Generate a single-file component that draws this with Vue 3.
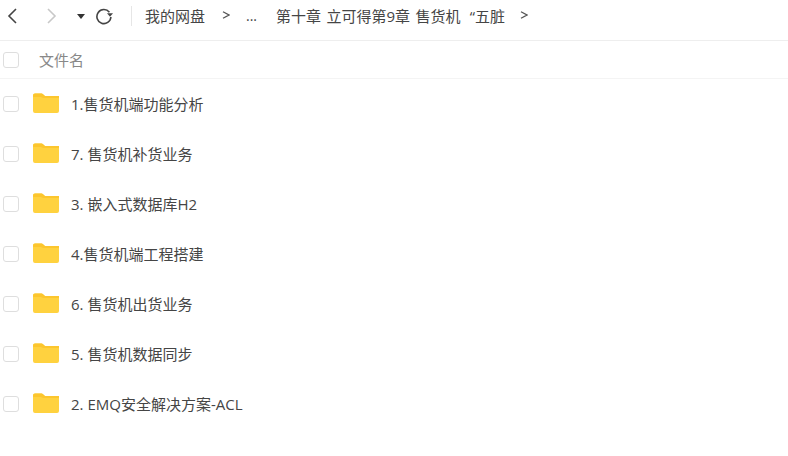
<template>
  <div class="page">
    <div class="toolbar">
      <button class="nav-btn back" type="button">
        <svg width="12" height="18" viewBox="0 0 12 18"><path d="M10 2 L3 9 L10 16" fill="none" stroke="#444" stroke-width="1.6" /></svg>
      </button>
      <button class="nav-btn forward" type="button">
        <svg width="12" height="18" viewBox="0 0 12 18"><path d="M2 2 L9 9 L2 16" fill="none" stroke="#c8c8c8" stroke-width="1.6" /></svg>
      </button>
      <span class="caret"></span>
      <button class="nav-btn refresh" type="button">
        <svg width="18" height="18" viewBox="0 0 18 18">
          <path d="M14.4 5.2 A7 7 0 1 0 15.9 10" fill="none" stroke="#444" stroke-width="1.6" />
          <path d="M12 6.2 L18 6.2 L15 9.8 Z" fill="#444" />
        </svg>
      </button>
      <span class="divider"></span>
      <nav class="crumbs">
        <span class="crumb root">我的网盘</span>
        <svg class="sep first" width="8" height="8" viewBox="0 0 8 8"><path d="M1 .8 L7 4 L1 7.2" fill="none" stroke="#555" stroke-width="1.3" /></svg>
        <span class="crumb dots">...</span>
        <span class="crumb current">第十章 立可得第9章 售货机 <span class="quoted">“五脏</span></span>
        <svg class="sep last" width="8" height="8" viewBox="0 0 8 8"><path d="M1 .8 L7 4 L1 7.2" fill="none" stroke="#555" stroke-width="1.3" /></svg>
      </nav>
    </div>

    <div class="head-row">
      <span class="check"></span>
      <span class="head-label">文件名</span>
    </div>

    <ul class="list">
      <li v-for="name in folders" :key="name" class="row">
        <span class="check"></span>
        <svg class="folder" width="26" height="20" viewBox="0 0 26 20">
          <path d="M0 2.5 A2 2 0 0 1 2 .5 H8.5 A2 2 0 0 1 10 1.2 L12 3 H24 A2 2 0 0 1 26 5 V18 A2 2 0 0 1 24 20 H2 A2 2 0 0 1 0 18 Z" fill="#ffd23f" />
          <path d="M0 2.5 A2 2 0 0 1 2 .5 H8.5 A2 2 0 0 1 10 1.2 L12 3 H26 V5 H10 L8 4 H0 Z" fill="#fcc62e" />
        </svg>
        <span class="name">{{ name }}</span>
      </li>
    </ul>
  </div>
</template>

<script setup>
const folders = [
  '1.售货机端功能分析',
  '7. 售货机补货业务',
  '3. 嵌入式数据库H2',
  '4.售货机端工程搭建',
  '6. 售货机出货业务',
  '5. 售货机数据同步',
  '2. EMQ安全解决方案-ACL',
]
</script>

<style>
html, body {
  margin: 0;
  background: #fff;
}
</style>

<style scoped>
.page {
  width: 788px;
  height: 456px;
  overflow: hidden;
  background: #fff;
  font-family: "Open Sans", "Noto Sans CJK SC", sans-serif;
  color: #454545;
}

.toolbar {
  display: flex;
  align-items: center;
  height: 32px;
  padding-bottom: 8px;
  border-bottom: 1px solid #eeeeee;
}

.nav-btn {
  display: flex;
  align-items: center;
  justify-content: center;
  padding: 0;
  border: 0;
  background: none;
}

.back {
  margin-left: 6px;
}

.forward {
  margin-left: 28px;
}

.caret {
  width: 0;
  height: 0;
  margin-left: 19px;
  border-left: 4px solid transparent;
  border-right: 4px solid transparent;
  border-top: 5px solid #333;
}

.refresh {
  margin-left: 10px;
}

.divider {
  width: 1px;
  height: 20px;
  margin-left: 18px;
  background: #e6e6e6;
}

.crumbs {
  display: flex;
  align-items: center;
  font-size: 15px;
  margin-left: 13px;
  margin-bottom: 2px;
}

.sep.first {
  margin-left: 17px;
}

.dots {
  margin-left: 16px;
  font-size: 14px;
}

.current {
  margin-left: 19px;
  word-spacing: 1.5px;
}

.quoted {
  margin-left: 4px;
}

.sep.last {
  margin-left: 15px;
}

.head-row {
  display: flex;
  align-items: center;
  height: 37px;
  border-bottom: 1px solid #f4f4f4;
}

.head-label {
  margin-left: 20px;
  font-size: 15px;
  color: #888;
}

.check {
  flex: none;
  box-sizing: border-box;
  width: 16px;
  height: 16px;
  margin-left: 3px;
  border: 1.5px solid #dedede;
  border-radius: 3px;
  background: #fff;
}

.list {
  margin: 0;
  padding: 0;
  list-style: none;
}

.row {
  display: flex;
  align-items: center;
  height: 50px;
}

.folder {
  margin-left: 14px;
  margin-bottom: 2px;
}

.name {
  margin-left: 12px;
  font-size: 15px;
  line-height: 20px;
  margin-bottom: 1px;
}
</style>
